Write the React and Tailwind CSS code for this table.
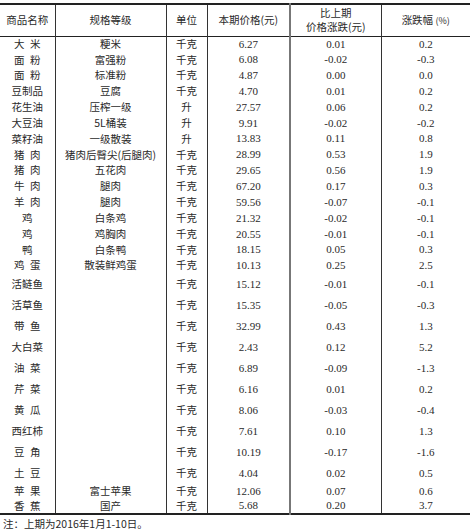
import React from 'react'

const top = [
  ['大 米', '粳米', '千克', '6.27', '0.01', '0.2'],
  ['面 粉', '富强粉', '千克', '6.08', '-0.02', '-0.3'],
  ['面 粉', '标准粉', '千克', '4.87', '0.00', '0.0'],
  ['豆制品', '豆腐', '千克', '4.70', '0.01', '0.2'],
  ['花生油', '压榨一级', '升', '27.57', '0.06', '0.2'],
  ['大豆油', '5L桶装', '升', '9.91', '-0.02', '-0.2'],
  ['菜籽油', '一级散装', '升', '13.83', '0.11', '0.8'],
  ['猪 肉', '猪肉后臀尖(后腿肉)', '千克', '28.99', '0.53', '1.9'],
  ['猪 肉', '五花肉', '千克', '29.65', '0.56', '1.9'],
  ['牛 肉', '腿肉', '千克', '67.20', '0.17', '0.3'],
  ['羊 肉', '腿肉', '千克', '59.56', '-0.07', '-0.1'],
  ['鸡', '白条鸡', '千克', '21.32', '-0.02', '-0.1'],
  ['鸡', '鸡胸肉', '千克', '20.55', '-0.01', '-0.1'],
  ['鸭', '白条鸭', '千克', '18.15', '0.05', '0.3'],
  ['鸡 蛋', '散装鲜鸡蛋', '千克', '10.13', '0.25', '2.5'],
]

const tall = [
  ['活鲢鱼', '', '千克', '15.12', '-0.01', '-0.1'],
  ['活草鱼', '', '千克', '15.35', '-0.05', '-0.3'],
  ['带 鱼', '', '千克', '32.99', '0.43', '1.3'],
  ['大白菜', '', '千克', '2.43', '0.12', '5.2'],
  ['油 菜', '', '千克', '6.89', '-0.09', '-1.3'],
  ['芹 菜', '', '千克', '6.16', '0.01', '0.2'],
  ['黄 瓜', '', '千克', '8.06', '-0.03', '-0.4'],
  ['西红柿', '', '千克', '7.61', '0.10', '1.3'],
  ['豆 角', '', '千克', '10.19', '-0.17', '-1.6'],
  ['土 豆', '', '千克', '4.04', '0.02', '0.5'],
]

const fruit = [
  ['苹 果', '富士苹果', '千克', '12.06', '0.07', '0.6'],
  ['香 蕉', '国产', '千克', '5.68', '0.20', '3.7'],
]

const cjk = "font-['Noto_Sans_CJK_SC',sans-serif]"
const num = "font-['Liberation_Serif','Noto_Sans_CJK_SC',serif]"

function Row({ r, h }) {
  return (
    <tr className={h}>
      <td className={`${cjk} text-center [word-spacing:3px]`}>{r[0]}</td>
      <td className={`${cjk} text-center border-l border-[#333]`}>{r[1]}</td>
      <td className={`${cjk} text-center border-l border-[#333]`}>{r[2]}</td>
      <td className={`${num} text-center border-l border-[#333] text-[11px]`}>{r[3]}</td>
      <td className={`${num} text-center border-l-2 border-[#777] text-[11px]`}>{r[4]}</td>
      <td className={`${num} text-center border-l border-[#333] text-[11px]`}>{r[5]}</td>
    </tr>
  )
}

export default function App() {
  return (
    <div className="w-[474px] h-[530px] bg-white pt-[3px] text-[#2a2a2a] text-[10.5px] leading-none">
      <table className="w-[470px] table-fixed border-collapse">
        <colgroup>
          <col className="w-[55px]" />
          <col className="w-[111px]" />
          <col className="w-[41px]" />
          <col className="w-[83px]" />
          <col className="w-[91px]" />
          <col className="w-[89px]" />
        </colgroup>
        <thead>
          <tr className="h-[32px] border-t-2 border-b border-[#222]">
            <th className={`${cjk} font-normal`}>商品名称</th>
            <th className={`${cjk} font-normal border-l border-[#333]`}>规格等级</th>
            <th className={`${cjk} font-normal border-l border-[#333]`}>单位</th>
            <th className={`${cjk} font-normal border-l border-[#333]`}>本期价格(元)</th>
            <th className={`${cjk} font-normal border-l-2 border-[#777] leading-[14px]`}>
              比上期<br />价格涨跌(元)
            </th>
            <th className={`${cjk} font-normal border-l border-[#333]`}>
              涨跌幅 <span className="text-[9px]">(%)</span>
            </th>
          </tr>
        </thead>
        <tbody className="border-b-2 border-[#222]">
          {top.map((r, i) => <Row key={'a' + i} r={r} h="h-[15.85px]" />)}
          {tall.map((r, i) => <Row key={'b' + i} r={r} h="h-[21px]" />)}
          {fruit.map((r, i) => <Row key={'c' + i} r={r} h="h-[15.2px]" />)}
        </tbody>
      </table>
      <p className={`${cjk} mt-[4px] pl-[3px] text-[10.5px]`}>注：上期为2016年1月1-10日。</p>
    </div>
  )
}
